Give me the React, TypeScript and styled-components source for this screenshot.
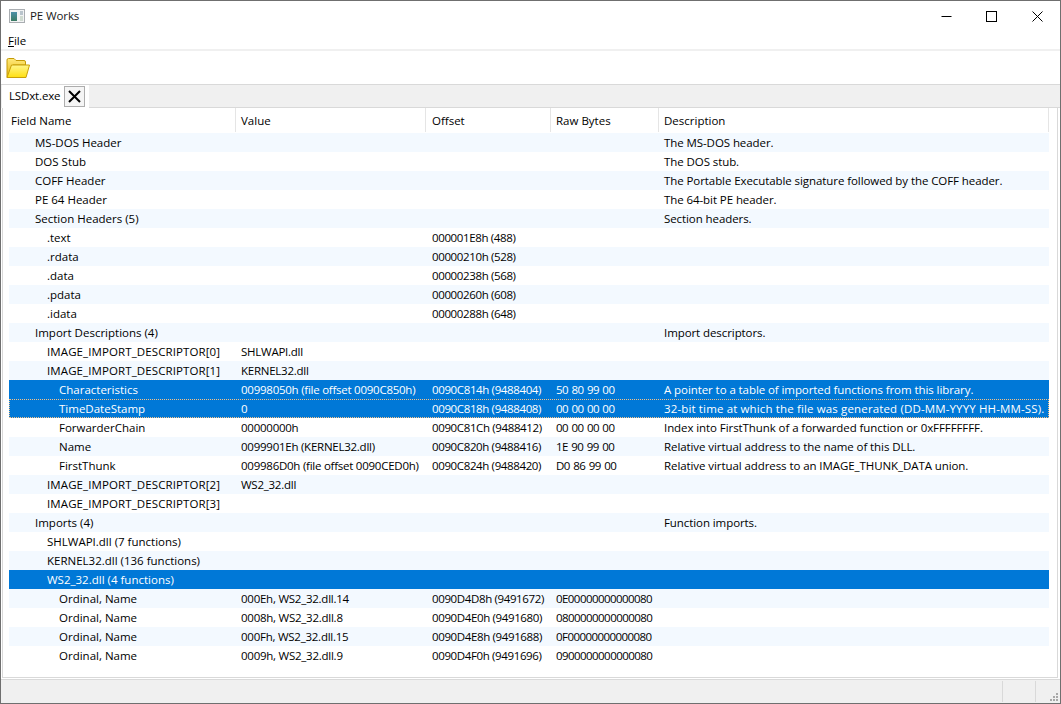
import React from "react";
import styled, { createGlobalStyle } from "styled-components";

type Row = {
  level: 1 | 2 | 3;
  name: string;
  value?: string;
  offset?: string;
  raw?: string;
  desc?: string;
  selected?: boolean;
  focused?: boolean;
  wideName?: boolean;
  wideDesc?: boolean;
};

const rows: Row[] = [
  { level: 1, name: "MS-DOS Header", desc: "The MS-DOS header." },
  { level: 1, name: "DOS Stub", desc: "The DOS stub." },
  { level: 1, name: "COFF Header", desc: "The Portable Executable signature followed by the COFF header." },
  { level: 1, name: "PE 64 Header", desc: "The 64-bit PE header." },
  { level: 1, name: "Section Headers (5)", desc: "Section headers." },
  { level: 2, name: ".text", offset: "000001E8h (488)" },
  { level: 2, name: ".rdata", offset: "00000210h (528)" },
  { level: 2, name: ".data", offset: "00000238h (568)" },
  { level: 2, name: ".pdata", offset: "00000260h (608)" },
  { level: 2, name: ".idata", offset: "00000288h (648)" },
  { level: 1, name: "Import Descriptions (4)", desc: "Import descriptors." },
  { level: 2, name: "IMAGE_IMPORT_DESCRIPTOR[0]", value: "SHLWAPI.dll", wideName: true },
  { level: 2, name: "IMAGE_IMPORT_DESCRIPTOR[1]", value: "KERNEL32.dll", wideName: true },
  {
    level: 3,
    name: "Characteristics",
    value: "00998050h (file offset 0090C850h)",
    offset: "0090C814h (9488404)",
    raw: "50 80 99 00",
    desc: "A pointer to a table of imported functions from this library.",
    selected: true,
  },
  {
    level: 3,
    name: "TimeDateStamp",
    value: "0",
    offset: "0090C818h (9488408)",
    raw: "00 00 00 00",
    desc: "32-bit time at which the file was generated (DD-MM-YYYY HH-MM-SS).",
    selected: true,
    focused: true,
    wideDesc: true,
  },
  {
    level: 3,
    name: "ForwarderChain",
    value: "00000000h",
    offset: "0090C81Ch (9488412)",
    raw: "00 00 00 00",
    desc: "Index into FirstThunk of a forwarded function or 0xFFFFFFFF.",
  },
  {
    level: 3,
    name: "Name",
    value: "0099901Eh (KERNEL32.dll)",
    offset: "0090C820h (9488416)",
    raw: "1E 90 99 00",
    desc: "Relative virtual address to the name of this DLL.",
  },
  {
    level: 3,
    name: "FirstThunk",
    value: "009986D0h (file offset 0090CED0h)",
    offset: "0090C824h (9488420)",
    raw: "D0 86 99 00",
    desc: "Relative virtual address to an IMAGE_THUNK_DATA union.",
  },
  { level: 2, name: "IMAGE_IMPORT_DESCRIPTOR[2]", value: "WS2_32.dll", wideName: true },
  { level: 2, name: "IMAGE_IMPORT_DESCRIPTOR[3]", wideName: true },
  { level: 1, name: "Imports (4)", desc: "Function imports." },
  { level: 2, name: "SHLWAPI.dll (7 functions)" },
  { level: 2, name: "KERNEL32.dll (136 functions)" },
  { level: 2, name: "WS2_32.dll (4 functions)", selected: true },
  { level: 3, name: "Ordinal, Name", value: "000Eh, WS2_32.dll.14", offset: "0090D4D8h (9491672)", raw: "0E00000000000080" },
  { level: 3, name: "Ordinal, Name", value: "0008h, WS2_32.dll.8", offset: "0090D4E0h (9491680)", raw: "0800000000000080" },
  { level: 3, name: "Ordinal, Name", value: "000Fh, WS2_32.dll.15", offset: "0090D4E8h (9491688)", raw: "0F00000000000080" },
  { level: 3, name: "Ordinal, Name", value: "0009h, WS2_32.dll.9", offset: "0090D4F0h (9491696)", raw: "0900000000000080" },
];

const columns = "227px 190px 125px 108px 390px";

const GlobalStyle = createGlobalStyle`
  html, body {
    margin: 0;
    padding: 0;
    background: #fff;
  }
  body {
    font-family: "Open Sans", "Noto Sans", sans-serif;
    font-size: 11.5px;
    color: #000;
  }
`;

const Window = styled.div`
  width: 1061px;
  height: 704px;
  box-sizing: border-box;
  border: 1px solid #6f6f6f;
  display: flex;
  flex-direction: column;
  overflow: hidden;
  background: #fff;
`;

const TitleBar = styled.div`
  height: 30px;
  display: flex;
  align-items: center;
  padding-left: 8px;
  flex-shrink: 0;
`;

const TitleText = styled.span`
  flex: 1;
  margin-left: 5px;
  margin-top: -2px;
  letter-spacing: -0.1px;
  color: #1a1a1a;
`;

const WindowButton = styled.div`
  width: 45.5px;
  height: 30px;
  display: flex;
  align-items: center;
  justify-content: center;
  flex-shrink: 0;
`;

const MenuBar = styled.div`
  height: 18px;
  padding-left: 7px;
  display: flex;
  align-items: center;
  flex-shrink: 0;
  border-bottom: 2px solid #f0f0f0;
`;

const MenuKey = styled.span`
  text-decoration: underline;
`;

const ToolBar = styled.div`
  height: 33px;
  padding-left: 5px;
  display: flex;
  align-items: center;
  flex-shrink: 0;
  border-bottom: 1px solid #d9d9d9;
`;

const TabBar = styled.div`
  height: 23px;
  display: flex;
  flex-shrink: 0;
  background: #f0f0f0;
`;

const Tab = styled.div`
  width: 87px;
  margin-left: 1px;
  background: #fff;
  display: flex;
  align-items: center;
  padding-left: 7px;
  box-sizing: border-box;
  letter-spacing: -0.15px;
`;

const TabLabel = styled.span`
  width: 55px;
  margin-top: -2px;
`;

const TabClose = styled.div`
  width: 21px;
  height: 21px;
  box-sizing: border-box;
  border: 1px solid #adadad;
  background: #f5f5f5;
  display: flex;
  align-items: center;
  justify-content: center;
  flex-shrink: 0;
`;

const TabFiller = styled.div`
  flex: 1;
  border-bottom: 1px solid #d9d9d9;
`;

const Pane = styled.div`
  flex: 1;
  margin: 0 2px 0 1px;
  padding-left: 6px;
  border-left: 1px solid #d9d9d9;
  border-right: 1px solid #d9d9d9;
  border-bottom: 1px solid #d9d9d9;
  min-height: 0;
`;

const HeaderRow = styled.div`
  display: grid;
  grid-template-columns: ${columns};
  height: 25px;
  width: 1040px;
`;

const HeaderCell = styled.div<{ $pad: number }>`
  display: flex;
  align-items: center;
  padding-left: ${(p) => p.$pad}px;
  border-right: 1px solid #e5e5e5;
  margin-bottom: 1px;
`;

const DataRow = styled.div<{ $tint: boolean; $selected?: boolean; $focused?: boolean }>`
  display: grid;
  grid-template-columns: ${columns};
  height: 19px;
  width: 1040px;
  box-sizing: border-box;
  line-height: 19px;
  white-space: nowrap;
  background: ${(p) => (p.$selected ? "#0078d7" : p.$tint ? "#f3f9ff" : "#fff")};
  color: ${(p) => (p.$selected ? "#fff" : "#000")};
  outline: ${(p) => (p.$focused ? "1px dotted #f5c28a" : "none")};
  outline-offset: -1px;
`;

const NameCell = styled.div<{ $level: number; $wide?: boolean }>`
  padding-left: ${(p) => 14 + p.$level * 12}px;
  letter-spacing: ${(p) => (p.$wide ? "0.1px" : "0")};
`;

const ValueCell = styled.div`
  padding-left: 5px;
  letter-spacing: -0.25px;
`;

const OffsetCell = styled.div`
  padding-left: 6px;
  letter-spacing: -0.37px;
`;

const RawCell = styled.div`
  padding-left: 5px;
  letter-spacing: -0.56px;
  word-spacing: 1px;
`;

const DescCell = styled.div<{ $wide?: boolean }>`
  padding-left: 5px;
  letter-spacing: ${(p) => (p.$wide ? "0.14px" : "-0.08px")};
`;

const StatusBar = styled.div`
  height: 23px;
  margin-top: 1px;
  display: flex;
  flex-shrink: 0;
  background: #f0f0f0;
  border-top: 1px solid #d9d9d9;
  position: relative;
`;

const StatusSection = styled.div<{ $width?: number }>`
  ${(p) => (p.$width ? `width: ${p.$width}px;` : "flex: 1;")}
  margin: 1px 0;
  border-right: 1px solid #d9d9d9;
  &:last-of-type {
    border-right: none;
  }
`;

const SizeGrip = styled.svg`
  position: absolute;
  right: 1px;
  bottom: 1px;
`;

const AppIcon = () => (
  <svg width="16" height="14" viewBox="0 0 16 14">
    <defs>
      <linearGradient id="appPane" x1="0" y1="0" x2="0" y2="1">
        <stop offset="0" stopColor="#4d8fa8" />
        <stop offset="1" stopColor="#3a7a62" />
      </linearGradient>
    </defs>
    <rect x="0.5" y="0.5" width="15" height="13" fill="#f2f3f4" stroke="#a9adb1" />
    <rect x="2" y="3" width="6" height="9" fill="url(#appPane)" />
    <rect x="11" y="2" width="3" height="4" fill="#b9c4cc" />
    <rect x="11" y="7" width="3" height="5" fill="#cfdad0" />
  </svg>
);

const FolderIcon = () => (
  <svg width="24" height="22" viewBox="0 0 24 22">
    <defs>
      <linearGradient id="folderBack" x1="0" y1="0" x2="0" y2="1">
        <stop offset="0" stopColor="#ffe97a" />
        <stop offset="1" stopColor="#e8b810" />
      </linearGradient>
      <linearGradient id="folderFront" x1="0" y1="0" x2="0" y2="1">
        <stop offset="0" stopColor="#fff68c" />
        <stop offset="1" stopColor="#ffdf10" />
      </linearGradient>
    </defs>
    <path
      d="M1 20.5 V3 Q1 1.5 2.5 1.5 H8 L10 3.5 H18 Q19.5 3.5 19.5 5 V8 H7 L3 20.5 Z"
      fill="url(#folderBack)"
      stroke="#c49a06"
    />
    <path d="M1 20.5 L5.5 8 H23.5 L20 20.5 Z" fill="url(#folderFront)" stroke="#c9a008" strokeLinejoin="round" />
  </svg>
);

export default function App() {
  return (
    <>
      <GlobalStyle />
      <Window>
        <TitleBar>
          <AppIcon />
          <TitleText>PE Works</TitleText>
          <WindowButton>
            <svg width="11" height="11" viewBox="0 0 11 11">
              <path d="M0.5 5.5 H10.5" stroke="#000" strokeWidth="1" />
            </svg>
          </WindowButton>
          <WindowButton>
            <svg width="11" height="11" viewBox="0 0 11 11">
              <rect x="0.5" y="0.5" width="10" height="10" fill="none" stroke="#000" />
            </svg>
          </WindowButton>
          <WindowButton>
            <svg width="11" height="11" viewBox="0 0 11 11">
              <path d="M0.5 0.5 L10.5 10.5 M10.5 0.5 L0.5 10.5" stroke="#000" strokeWidth="1" />
            </svg>
          </WindowButton>
        </TitleBar>
        <MenuBar>
          <span>
            <MenuKey>F</MenuKey>ile
          </span>
        </MenuBar>
        <ToolBar>
          <FolderIcon />
        </ToolBar>
        <TabBar>
          <Tab>
            <TabLabel>LSDxt.exe</TabLabel>
            <TabClose>
              <svg width="13" height="13" viewBox="0 0 13 13">
                <path d="M1 1 L12 12 M12 1 L1 12" stroke="#000" strokeWidth="2" />
              </svg>
            </TabClose>
          </Tab>
          <TabFiller />
        </TabBar>
        <Pane>
          <HeaderRow>
            <HeaderCell $pad={2}>Field Name</HeaderCell>
            <HeaderCell $pad={5}>Value</HeaderCell>
            <HeaderCell $pad={6}>Offset</HeaderCell>
            <HeaderCell $pad={5}>Raw Bytes</HeaderCell>
            <HeaderCell $pad={5}>Description</HeaderCell>
          </HeaderRow>
          {rows.map((r, i) => (
            <DataRow key={i} $tint={i % 2 === 0} $selected={r.selected} $focused={r.focused}>
              <NameCell $level={r.level} $wide={r.wideName}>
                {r.name}
              </NameCell>
              <ValueCell>{r.value}</ValueCell>
              <OffsetCell>{r.offset}</OffsetCell>
              <RawCell>{r.raw}</RawCell>
              <DescCell $wide={r.wideDesc}>{r.desc}</DescCell>
            </DataRow>
          ))}
        </Pane>
        <StatusBar>
          <StatusSection />
          <StatusSection $width={32} />
          <StatusSection $width={24} />
          <SizeGrip width="10" height="10" viewBox="0 0 10 10">
            <g fill="#a8a8a8">
              <rect x="7" y="1" width="2" height="2" />
              <rect x="4" y="4" width="2" height="2" />
              <rect x="7" y="4" width="2" height="2" />
              <rect x="1" y="7" width="2" height="2" />
              <rect x="4" y="7" width="2" height="2" />
              <rect x="7" y="7" width="2" height="2" />
            </g>
          </SizeGrip>
        </StatusBar>
      </Window>
    </>
  );
}
